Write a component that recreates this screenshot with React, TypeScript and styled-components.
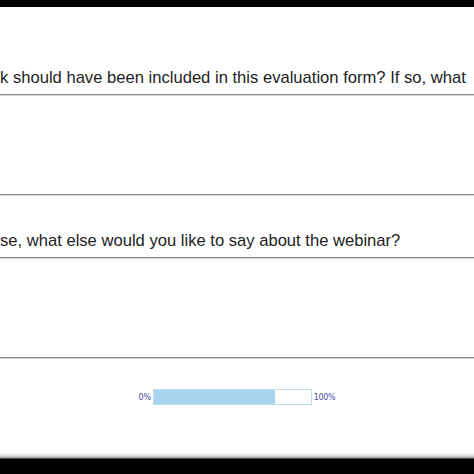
import React from "react"
import styled, { createGlobalStyle } from "styled-components"

const GlobalStyle = createGlobalStyle`
    html, body {
        margin: 0;
        padding: 0;
        background: #ffffff;
    }
    body {
        font-family: "Liberation Sans", Arial, sans-serif;
        overflow: hidden;
    }
`

const questions = [
    { id: "q1", text: "k should have been included in this evaluation form? If so, what", top: 62 },
    { id: "q2", text: "se, what else would you like to say about the webinar?", top: 37 },
]

const progress = 0.77

const App: React.FC = () => {
    return (
        <>
            <GlobalStyle />
            <Frame>
                <TopBar />
                <Form>
                    {questions.map(item => (
                        <QuestionBlock key={item.id}>
                            <QuestionText $top={item.top}>{item.text}</QuestionText>
                            <AnswerArea />
                        </QuestionBlock>
                    ))}
                    <ProgressRow>
                        <ProgressLabel>0%</ProgressLabel>
                        <ProgressTrack>
                            <ProgressFill style={{ width: `${progress * 100}%` }} />
                        </ProgressTrack>
                        <ProgressLabel>100%</ProgressLabel>
                    </ProgressRow>
                </Form>
                <BottomBar />
            </Frame>
        </>
    )
}

export default App

const Frame = styled.div`
    width: 474px;
    height: 474px;
    display: flex;
    flex-direction: column;
    overflow: hidden;
`

const TopBar = styled.div`
    height: 7px;
    background: #000;
    flex-shrink: 0;
`

const Form = styled.div`
    flex: 1;
    display: flex;
    flex-direction: column;
`

const QuestionBlock = styled.div`
    display: flex;
    flex-direction: column;
`

const QuestionText = styled.div<{ $top: number }>`
    padding-top: ${props => props.$top}px;
    padding-bottom: 7px;
    font-size: 16.6px;
    line-height: 18px;
    color: #222;
    white-space: nowrap;
    border-bottom: 1px solid #8a8a8a;
    box-shadow: 0 1px 0 #d6d6d6;
`

const AnswerArea = styled.div`
    height: 99px;
    border-bottom: 1px solid #8a8a8a;
    box-shadow: 0 1px 0 #d6d6d6;
`

const ProgressRow = styled.div`
    margin-top: 31px;
    display: flex;
    align-items: center;
    justify-content: center;
    gap: 2px;
`

const ProgressLabel = styled.span`
    font-family: "DejaVu Sans", Verdana, sans-serif;
    font-size: 8px;
    color: #4b4ba6;
    letter-spacing: -0.3px;
`

const ProgressTrack = styled.div`
    width: 157px;
    height: 14px;
    border: 1px solid #c4dbea;
    background: #fff;
    display: flex;
`

const ProgressFill = styled.div`
    height: 100%;
    background: #a7d5ee;
`

const BottomBar = styled.div`
    height: 21px;
    flex-shrink: 0;
    background: linear-gradient(to bottom, #ffffff 0px, #d8d8d8 3px, #9a9a9a 5px, #000 6px, #000 100%);
`
